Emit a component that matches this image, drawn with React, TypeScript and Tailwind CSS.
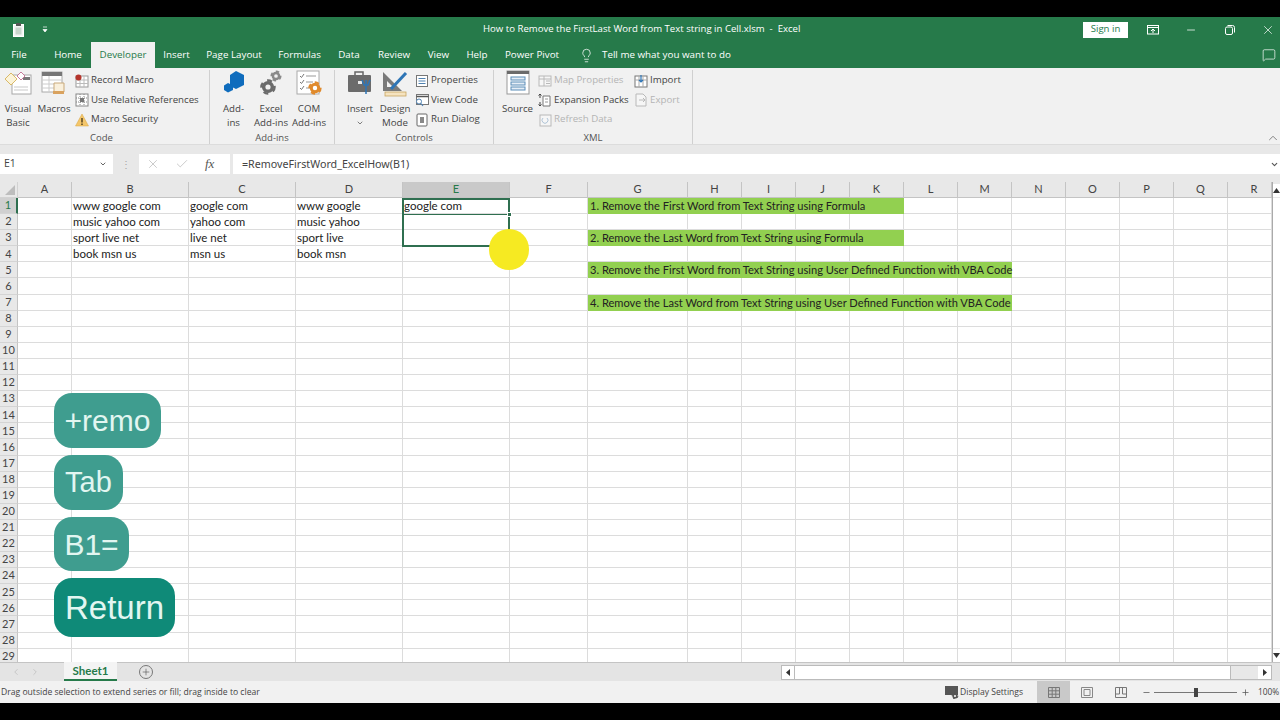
import { Minus, X, Check, Plus, ChevronDown, ChevronUp, Lightbulb, MessageSquare, ChevronLeft, ChevronRight } from "lucide-react"
import type { ReactNode } from "react"

const columns = ["A", "B", "C", "D", "E", "F", "G", "H", "I", "J", "K", "L", "M", "N", "O", "P", "Q", "R"]
const rows = Array.from({ length: 29 }, (_, i) => i + 1)

const cellText: Record<string, string> = {
  B1: "www google com",
  C1: "google com",
  D1: "www google",
  E1: "google com",
  B2: "music yahoo com",
  C2: "yahoo com",
  D2: "music yahoo",
  B3: "sport live net",
  C3: "live net",
  D3: "sport live",
  B4: "book msn us",
  C4: "msn us",
  D4: "book msn",
  G1: "1. Remove the First Word from Text String using Formula",
  G3: "2. Remove the Last Word from Text String using Formula",
  G5: "3. Remove the First Word from Text String using User Defined Function with VBA Code",
  G7: "4. Remove the Last Word from Text String using User Defined Function with VBA Code",
}

const tabs = [
  { label: "File", w: "w-[38px]" },
  { label: "Home", w: "w-[53px] pl-[7px]" },
  { label: "Developer", w: "w-[64px]", active: true },
  { label: "Insert", w: "w-[43px]" },
  { label: "Page Layout", w: "w-[72px]" },
  { label: "Formulas", w: "w-[59px]" },
  { label: "Data", w: "w-[40px]" },
  { label: "Review", w: "w-[50px]" },
  { label: "View", w: "w-[39px]" },
  { label: "Help", w: "w-[38px]" },
  { label: "Power Pivot", w: "w-[72px]" },
]

function isGreen(col: string, row: number) {
  const short = ["G", "H", "I", "J", "K"]
  const long = [...short, "L", "M"]
  if (row === 1 || row === 3) return short.includes(col)
  if (row === 5 || row === 7) return long.includes(col)
  return false
}

function Gear({ x, y, r, color }: { x: number; y: number; r: number; color: string }) {
  return (
    <g>
      <circle cx={x} cy={y} r={r * 0.62} fill="none" stroke={color} strokeWidth={r * 0.5} />
      <circle cx={x} cy={y} r={r * 0.95} fill="none" stroke={color} strokeWidth={r * 0.32} strokeDasharray={`${r * 0.72} ${r * 0.72}`} />
    </g>
  )
}

function VisualBasicIcon() {
  return (
    <svg width="28" height="26" viewBox="0 0 28 26">
      <rect x="8" y="5" width="19" height="19" fill="#fff" stroke="#a8a8a8" />
      <path d="M10 17h14M10 20h14" stroke="#c9c9c9" />
      <rect x="19" y="7" width="7" height="3" fill="#777" />
      <path d="M7 3l6 6-6 6-6-6z" fill="#fbf3d8" stroke="#d9b968" />
      <path d="M17 2l4 4-4 4-4-4z" fill="#fff" stroke="#c77a9a" />
    </svg>
  )
}

function MacrosIcon() {
  return (
    <svg width="26" height="26" viewBox="0 0 26 26">
      <rect x="1" y="2" width="20" height="20" fill="#fff" stroke="#aaa" />
      <rect x="1" y="2" width="20" height="4" fill="#777" />
      <path d="M1 10h20M1 14h20M1 18h20M8 6v16" stroke="#ccc" />
      <path d="M13 13h10v9h-10z" fill="#faf0dc" stroke="#c9a97a" />
      <rect x="12" y="21" width="11" height="3" fill="#d9a25f" />
    </svg>
  )
}

function AddinsIcon() {
  return (
    <svg width="22" height="23" viewBox="0 0 22 23">
      <path d="M13 1l8 4v10l-8 4-6-3V5z" fill="#0f6cbd" />
      <path d="M5 13l5 2.5V20l-5 2.500L1 20v-4.500z" fill="#0f6cbd" />
    </svg>
  )
}

function ExcelAddinsIcon() {
  return (
    <svg width="24" height="26" viewBox="0 0 24 26">
      <Gear x={17} y={6} r={5} color="#8a8a8a" />
      <Gear x={9} y={17} r={7} color="#6b6b6b" />
    </svg>
  )
}

function ComAddinsIcon() {
  return (
    <svg width="27" height="26" viewBox="0 0 27 26">
      <rect x="1" y="1" width="22" height="23" fill="#fff" stroke="#aaa" />
      <path d="M4 6l1.500 1.500L8 4M4 12l1.500 1.500L8 10M4 18l1.500 1.500L8 16" fill="none" stroke="#777" />
      <path d="M10 6h10M10 12h7M10 18h4" stroke="#999" />
      <Gear x={19} y={18} r={6} color="#e08a2c" />
    </svg>
  )
}

function InsertIcon() {
  return (
    <svg width="26" height="26" viewBox="0 0 26 26">
      <path d="M8 5V2h8v3" fill="none" stroke="#666" strokeWidth="1.500" />
      <rect x="1" y="5" width="23" height="17" rx="1" fill="#6b6b6b" />
      <rect x="11" y="11" width="4" height="3" fill="#e8e8e8" />
      <path d="M19 10v14M23 10l-2 5h-4l-2-5" fill="none" stroke="#2e75b6" strokeWidth="1.500" />
    </svg>
  )
}

function DesignModeIcon() {
  return (
    <svg width="26" height="28" viewBox="0 0 26 28">
      <path d="M1 2v19h19z" fill="#7a7a7a" />
      <path d="M5 11v6h6z" fill="#f1f1f1" />
      <path d="M9 19L24 3" stroke="#2e75b6" strokeWidth="3" />
      <rect x="3" y="22" width="21" height="4" fill="#f5e3c0" stroke="#c9a55f" strokeWidth="0.800" />
    </svg>
  )
}

function SourceIcon() {
  return (
    <svg width="24" height="25" viewBox="0 0 24 25">
      <rect x="1" y="1" width="22" height="23" fill="#fff" stroke="#999" />
      <rect x="1" y="1" width="22" height="3" fill="#6b6b6b" />
      <rect x="5" y="7" width="14" height="3" fill="#e6eef6" stroke="#5b8db8" />
      <rect x="5" y="12" width="14" height="3" fill="#e6eef6" stroke="#5b8db8" />
      <rect x="5" y="17" width="14" height="3" fill="#e6eef6" stroke="#5b8db8" />
    </svg>
  )
}

function SmallIcon({ kind, faded }: { kind: string; faded?: boolean }) {
  return (
    <svg width="14" height="14" viewBox="0 0 14 14" className={faded ? "opacity-40" : ""}>
      {kind === "record" && (
        <>
          <rect x="1" y="2" width="12" height="11" fill="#fff" stroke="#999" />
          <path d="M1 6h12M1 9.500h12M5 2v11M9 2v11" stroke="#bbb" />
          <circle cx="3.500" cy="3.500" r="3" fill="#b5352c" />
        </>
      )}
      {kind === "relative" && (
        <>
          <rect x="1" y="1" width="12" height="12" fill="#fff" stroke="#888" />
          <path d="M1 5h12M1 9h12M5 1v12M9 1v12" stroke="#888" strokeDasharray="1 1" />
          <rect x="5" y="5" width="4" height="4" fill="#777" />
        </>
      )}
      {kind === "warning" && (
        <>
          <path d="M7 1l6.500 12H.5z" fill="#f4c66a" stroke="#d8a642" strokeWidth="0.500" />
          <path d="M7 5v4.500M7 10.500v1.500" stroke="#4a3b1c" strokeWidth="1.400" />
        </>
      )}
      {kind === "properties" && (
        <>
          <rect x="1.500" y="1.500" width="11" height="11" fill="#fff" stroke="#777" />
          <path d="M3.500 4.500h7M3.500 7h7M3.500 9.500h7" stroke="#4f81b0" />
        </>
      )}
      {kind === "code" && (
        <>
          <rect x="1.500" y="1.500" width="12" height="10" fill="#fff" stroke="#777" />
          <path d="M1.500 3.500h12" stroke="#555" strokeWidth="1.500" />
          <circle cx="4" cy="8.500" r="2.500" fill="#fff" stroke="#4f81b0" />
          <path d="M6 10.500l2 2.500" stroke="#4f81b0" strokeWidth="1.200" />
        </>
      )}
      {kind === "dialog" && (
        <>
          <rect x="2" y="1" width="10" height="12" rx="1" fill="#fff" stroke="#666" />
          <rect x="5" y="4" width="4" height="6" fill="#888" />
        </>
      )}
      {kind === "map" && (
        <>
          <rect x="1" y="2" width="12" height="10" fill="#fff" stroke="#666" />
          <path d="M1 5h12M6 2v10M8 7h4M8 9.500h4" stroke="#666" />
        </>
      )}
      {kind === "packs" && (
        <>
          <path d="M5 3h7v10H5z" fill="#fff" stroke="#777" />
          <path d="M2 5V1M.5 2.500L2 1l1.500 1.500M2 9v4M.5 11.500L2 13l1.500-1.500" fill="none" stroke="#444" />
          <path d="M7 6h3M7 9h3" stroke="#999" />
        </>
      )}
      {kind === "refresh" && (
        <>
          <rect x="2" y="2" width="11" height="11" fill="#fff" stroke="#666" />
          <path d="M5 5a3 3 0 1 0 4 0" fill="none" stroke="#4f81b0" />
        </>
      )}
      {kind === "import" && (
        <>
          <rect x="1" y="2" width="12" height="11" fill="#fff" stroke="#777" />
          <path d="M1 6h12M5 2v11M9 2v11" stroke="#aaa" />
          <path d="M7 1v7M5 6l2 2 2-2" fill="none" stroke="#2e75b6" strokeWidth="1.200" />
        </>
      )}
      {kind === "export" && (
        <>
          <path d="M2 1h7l3 3v9H2z" fill="#fff" stroke="#666" />
          <path d="M5 7h6M9 5l2 2-2 2" fill="none" stroke="#666" />
        </>
      )}
    </svg>
  )
}

function LargeButton({ icon, label, width }: { icon: ReactNode; label: ReactNode; width: string }) {
  return (
    <div className={`${width} flex flex-col items-center`}>
      <div className="h-[32px] flex items-start justify-center">{icon}</div>
      <div className="text-center leading-[14px] whitespace-nowrap">{label}</div>
    </div>
  )
}

function SmallButton({ kind, label, faded }: { kind: string; label: string; faded?: boolean }) {
  return (
    <div className="h-[19.500px] flex items-center gap-[2px] whitespace-nowrap">
      <SmallIcon kind={kind} faded={faded} />
      <span className={faded ? "text-[#b4b4b4]" : ""}>{label}</span>
    </div>
  )
}

function RibbonGroup({ width, label, labelClass = "", children }: { width: string; label: string; labelClass?: string; children: ReactNode }) {
  return (
    <div className={`${width} h-[74px] mt-[2px] flex flex-col shrink-0 border-r border-[#d0d0d0]`}>
      <div className="h-[61px] shrink-0 flex">{children}</div>
      <div className={`text-center text-[9.500px] leading-[14px] text-[#555] ${labelClass}`}>{label}</div>
    </div>
  )
}

function SmallColumn({ children, className = "" }: { children: ReactNode; className?: string }) {
  return <div className={`flex flex-col ${className}`}>{children}</div>
}

export default function App() {
  return (
    <div className="w-[1280px] h-[720px] bg-black pt-[17px] pb-[17px] overflow-hidden font-['Open_Sans',sans-serif]">
      <div className="h-[686px] flex flex-col bg-white relative">
        {/* title bar */}
        <div className="h-[25px] bg-[#267a4a] text-white flex items-center shrink-0">
          <div className="w-[483px] flex items-center pl-[13px] gap-[18px]">
            <svg width="11" height="14" viewBox="0 0 11 14">
              <rect x="0.500" y="1.500" width="10" height="12" fill="#f4f4f4" stroke="#fff" />
              <rect x="3" y="0" width="5" height="3" fill="#555" />
              <rect x="2.500" y="4.500" width="6" height="7" fill="#c9d6cd" />
            </svg>
            <svg width="6" height="7" viewBox="0 0 6 7">
              <path d="M1 1h4M1 3.500l2 2.500 2-2.500z" stroke="#fff" fill="#fff" strokeWidth="0.700" />
            </svg>
          </div>
          <div className="text-[9.600px] whitespace-pre pb-[1px]">How to Remove the FirstLast Word from Text string in Cell.xlsm  -  Excel</div>
          <div className="flex-1" />
          <div className="w-[45px] h-[16px] bg-white text-[#267a4a] text-[9.600px] flex items-center justify-center mr-[14px]">Sign in</div>
          <div className="w-[22px] flex justify-center mr-[17px]">
            <svg width="12" height="10" viewBox="0 0 12 10"><rect x="0.500" y="0.500" width="11" height="8.500" fill="none" stroke="#fff" /><path d="M.5 2.500h11" stroke="#fff" /><path d="M6 8V4M4 6l2-2 2 2" fill="none" stroke="#fff" /></svg>
          </div>
          <div className="w-[20px] flex justify-center mr-[19px]"><Minus size={12} strokeWidth={1.500} /></div>
          <div className="w-[20px] flex justify-center mr-[18px]">
            <svg width="10" height="10" viewBox="0 0 10 10"><rect x="0.500" y="2" width="7" height="7.500" rx="1.500" fill="none" stroke="#fff" /><path d="M2.500 .5h5a2 2 0 0 1 2 2v5" fill="none" stroke="#fff" /></svg>
          </div>
          <div className="w-[20px] flex justify-center mr-[2px]"><X size={14} strokeWidth={1.200} /></div>
        </div>

        {/* tabs */}
        <div className="h-[26px] bg-[#267a4a] text-white flex items-end text-[9.800px] shrink-0">
          {tabs.map((t) => (
            <div
              key={t.label}
              className={`${t.w} h-[26px] pt-[1px] flex items-center justify-center whitespace-nowrap ${t.active ? "bg-[#f1f1f1] text-[#267a4a]" : ""}`}
            >
              {t.label}
            </div>
          ))}
          <div className="h-[26px] pt-[1px] flex items-center pl-[11px] gap-[8px]">
            <Lightbulb size={15} strokeWidth={1.200} />
            <span className="whitespace-nowrap">Tell me what you want to do</span>
          </div>
          <div className="flex-1" />
          <div className="h-[26px] flex items-center pr-[4px]"><MessageSquare size={14} strokeWidth={1.200} /></div>
        </div>

        {/* ribbon */}
        <div className="h-[77px] bg-[#f1f1f1] text-[#444] text-[9.700px] flex items-start shrink-0 relative border-b border-[#dcdcdc]">
          <RibbonGroup width="w-[210px]" label="Code" labelClass="pr-[6px]">
            <LargeButton width="w-[36px]" icon={<VisualBasicIcon />} label={<>Visual<br />Basic</>} />
            <LargeButton width="w-[36px]" icon={<MacrosIcon />} label="Macros" />
            <SmallColumn className="pl-[3px] mt-[1px]">
              <SmallButton kind="record" label="Record Macro" />
              <SmallButton kind="relative" label="Use Relative References" />
              <SmallButton kind="warning" label="Macro Security" />
            </SmallColumn>
          </RibbonGroup>
          <RibbonGroup width="w-[125px]" label="Add-ins">
            <div className="w-[5px]" />
            <LargeButton width="w-[37px]" icon={<AddinsIcon />} label={<>Add-<br />ins</>} />
            <LargeButton width="w-[38px]" icon={<ExcelAddinsIcon />} label={<>Excel<br />Add-ins</>} />
            <LargeButton width="w-[38px]" icon={<ComAddinsIcon />} label={<>COM<br />Add-ins</>} />
          </RibbonGroup>
          <RibbonGroup width="w-[159px]" label="Controls">
            <div className="w-[7px]" />
            <LargeButton width="w-[36px]" icon={<InsertIcon />} label={<>Insert<br /><ChevronDown size={8} className="inline" /></>} />
            <LargeButton width="w-[34px]" icon={<DesignModeIcon />} label={<>Design<br />Mode</>} />
            <SmallColumn className="pl-[3px] mt-[1px]">
              <SmallButton kind="properties" label="Properties" />
              <SmallButton kind="code" label="View Code" />
              <SmallButton kind="dialog" label="Run Dialog" />
            </SmallColumn>
          </RibbonGroup>
          <RibbonGroup width="w-[199px]" label="XML">
            <div className="w-[7px]" />
            <LargeButton width="w-[33px]" icon={<SourceIcon />} label="Source" />
            <SmallColumn className="pl-[4px] w-[100px] mt-[1px]">
              <SmallButton kind="map" label="Map Properties" faded />
              <SmallButton kind="packs" label="Expansion Packs" />
              <SmallButton kind="refresh" label="Refresh Data" faded />
            </SmallColumn>
            <SmallColumn className="mt-[1px]">
              <SmallButton kind="import" label="Import" />
              <SmallButton kind="export" label="Export" faded />
            </SmallColumn>
          </RibbonGroup>
          <div className="flex-1" />
          <ChevronUp size={14} strokeWidth={1.200} className="absolute right-[0px] top-[63px] text-[#555]" />
        </div>

        {/* formula bar */}
        <div className="h-[37px] bg-[#e8e8e8] pt-[9px] flex items-start shrink-0 text-[#444]">
          <div className="w-[113px] h-[20px] bg-white flex items-center justify-between pl-[4px] pr-[6px] text-[10.500px]">
            <span>E1</span>
            <ChevronDown size={8} strokeWidth={3} className="text-[#666]" />
          </div>
          <div className="w-[26px] h-[20px] flex items-center justify-center text-[#a5a5a5] text-[10px] leading-none">⋮</div>
          <div className="w-[91px] h-[20px] bg-white flex items-center pl-[7px] gap-[15px] text-[#b5b5b5]">
            <X size={14} strokeWidth={1.200} />
            <Check size={14} strokeWidth={1.200} />
            <span className="font-['Liberation_Serif',serif] italic text-[13px] text-[#555] ml-[1px]">fx</span>
          </div>
          <div className="w-[3px]" />
          <div className="flex-1 h-[20px] bg-white flex items-center justify-between pl-[9px] pr-[1px] text-[10.700px] font-['Noto_Sans',sans-serif]">
            <span>=RemoveFirstWord_ExcelHow(B1)</span>
            <ChevronDown size={9} strokeWidth={3} className="text-[#555]" />
          </div>
        </div>

        {/* sheet */}
        <div className="h-[480px] flex shrink-0 relative">
          <div className="w-[1272px] h-[480px] overflow-hidden grid grid-cols-[18px_54px_117px_107px_107px_107px_78px_100px_54px_54px_54px_54px_54px_54px_54px_54px_54px_54px_44px] grid-rows-[16px] auto-rows-[16.100px] font-['Lato',sans-serif] text-[11.500px] text-[#222]">
            <div className="bg-[#e8e8e8] border-r border-b border-[#d2d2d2] relative overflow-hidden">
              <svg width="12" height="12" viewBox="0 0 12 12" className="absolute right-[1px] bottom-[1px]"><path d="M11 1v10H1z" fill="#bdbdbd" /></svg>
            </div>
            {columns.map((c) => (
              <div
                key={c}
                className={`border-r border-b border-[#c4c4c4] flex items-center justify-center text-[11px] ${c === "R" ? "pl-[9px]" : ""} ${c === "E" ? "bg-[#c9c9c9] text-[#267a4a]" : "bg-[#e8e8e8] text-[#444]"}`}
              >
                {c}
              </div>
            ))}
            {rows.map((r) => (
              <div key={r} className="contents">
                <div className={`border-b border-[#d4d4d4] flex items-center justify-center text-[11px] ${r === 1 ? "bg-[#d0d0d0] text-[#267a4a] border-r-2 border-r-[#2f6f50]" : "bg-[#e8e8e8] text-[#444] border-r border-r-[#c4c4c4]"}`}>
                  {r}
                </div>
                {columns.map((c) => {
                  const id = `${c}${r}`
                  const green = isGreen(c, r)
                  return (
                    <div
                      key={id}
                      className={`leading-[15px] pl-[1px] whitespace-nowrap relative ${green ? "bg-[#92d050]" : "border-r border-b border-[#dcdcdc]"} ${c === "G" ? "text-[11.100px] pl-[2px]" : ""}`}
                    >
                      {cellText[id] && <span className="relative z-10">{cellText[id]}</span>}
                    </div>
                  )
                })}
              </div>
            ))}
          </div>

          {/* scrollbar */}
          <div className="w-[8px] bg-[#e8e8e8] border-l border-[#aaa] flex flex-col justify-between items-center pt-[2px]">
            <div className="w-full h-[13px] bg-white flex items-center justify-center text-[#333]">
              <svg width="7" height="5" viewBox="0 0 7 5"><path d="M3.500 0l3.500 5H0z" fill="#333" /></svg>
            </div>
            <div className="flex-1 w-full bg-white my-[1px]" />
            <div className="w-full h-[13px] bg-white flex items-center justify-center">
              <svg width="7" height="5" viewBox="0 0 7 5"><path d="M3.500 5L7 0H0z" fill="#333" /></svg>
            </div>
          </div>

          {/* selection range */}
          <div className="absolute left-[402px] top-[16px] w-[108px] h-[49px] border-2 border-[#2f6f50] z-20">
            <div className="h-[15px] border-b border-[#2f6f50]" />
          </div>
          <div className="absolute left-[507px] top-[30px] w-[5px] h-[5px] bg-[#2f6f50] border border-white z-20" />

          {/* cursor highlight */}
          <div className="absolute left-[489px] top-[47px] w-[40px] h-[41px] rounded-full bg-[#f6ea22] blur-[0.5px] z-30" />

          {/* key overlay */}
          <div className="absolute left-[54px] top-[211px] flex flex-col items-start gap-[7px] z-30 font-['Liberation_Sans',sans-serif] text-[#e2f6f1]">
            <div className="w-[107px] h-[55px] rounded-[18px] bg-[#3f9d8f] flex items-center justify-center text-[30px]">+remo</div>
            <div className="w-[69px] h-[55px] rounded-[18px] bg-[#3f9d8f] flex items-center justify-center text-[29px]">Tab</div>
            <div className="w-[75px] h-[54px] rounded-[18px] bg-[#3f9d8f] flex items-center justify-center text-[30px]">B1=</div>
            <div className="w-[121px] h-[59px] rounded-[18px] bg-[#0f8a78] flex items-center justify-center text-[33px]">Return</div>
          </div>
        </div>

        {/* sheet tabs */}
        <div className="h-[19px] bg-[#e4e4e4] border-t border-[#c4c4c4] flex items-center shrink-0 relative">
          <div className="w-[64px] flex items-center pl-[11px] gap-[9px] text-[#c0c0c0]">
            <ChevronLeft size={10} strokeWidth={2} />
            <ChevronRight size={10} strokeWidth={2} />
          </div>
          <div className="w-[53px] h-[19px] -mt-[1px] bg-[#f4f4f4] border-b-2 border-[#267a4a] text-[#267a4a] text-[11.500px] font-bold flex items-center justify-center font-['Lato',sans-serif]">Sheet1</div>
          <div className="w-[14px] h-[14px] ml-[22px] rounded-full border border-[#777] flex items-center justify-center text-[#555]"><Plus size={10} strokeWidth={1.500} /></div>
          <div className="flex-1" />
          <div className="w-[491px] h-[15px] mr-[8px] bg-[#e8e8e8] border border-[#bbb] flex items-center">
            <div className="w-[12px] h-[13px] bg-white flex items-center justify-center"><svg width="4" height="7" viewBox="0 0 4 7"><path d="M0 3.500L4 0v7z" fill="#333" /></svg></div>
            <div className="w-[437px] h-[13px] bg-white border-x border-[#bbb]" />
            <div className="flex-1" />
            <div className="w-[13px] h-[13px] bg-white flex items-center justify-center"><svg width="4" height="7" viewBox="0 0 4 7"><path d="M4 3.500L0 0v7z" fill="#333" /></svg></div>
          </div>
        </div>

        {/* status bar */}
        <div className="h-[22px] bg-[#f1f1f1] flex items-center shrink-0 text-[#444] text-[8.600px] whitespace-nowrap">
          <span className="pl-[1px]">Drag outside selection to extend series or fill; drag inside to clear</span>
          <div className="flex-1" />
          <svg width="14" height="13" viewBox="0 0 14 13" className="mr-[1px]">
            <rect x="0" y="0" width="13" height="9" fill="#555" />
            <Gear x={10} y={10} r={3} color="#555" />
          </svg>
          <span className="w-[77px]">Display Settings</span>
          <div className="w-[33px] h-[22px] bg-[#c9c9c9] flex items-center justify-center">
            <svg width="12" height="11" viewBox="0 0 12 11"><path d="M.5.500h11v10H.5zM.5 3.800h11M.5 7.200h11M4.200.5v10M7.800.5v10" fill="none" stroke="#777" /></svg>
          </div>
          <div className="w-[34px] flex justify-center">
            <svg width="12" height="11" viewBox="0 0 12 11"><path d="M.5.500h11v10H.5z" fill="none" stroke="#888" /><path d="M3 2.500h6v6H3z" fill="none" stroke="#888" /></svg>
          </div>
          <div className="w-[33px] flex justify-center">
            <svg width="12" height="11" viewBox="0 0 12 11"><path d="M.5.500h11v10H.5zM.5 7h4V.5M7.500.5V7h4" fill="none" stroke="#777" /></svg>
          </div>
          <div className="w-[14px] flex justify-end text-[#555]"><Minus size={9} /></div>
          <div className="w-[83px] h-[9px] mx-[3px] relative flex items-center">
            <div className="w-full h-px bg-[#777]" />
            <div className="absolute left-[40px] w-[4px] h-[9px] bg-[#444]" />
          </div>
          <div className="w-[10px] flex justify-center text-[#555]"><Plus size={9} /></div>
          <span className="pl-[8px] w-[30px] text-[8.400px]">100%</span>
        </div>
      </div>
    </div>
  )
}
